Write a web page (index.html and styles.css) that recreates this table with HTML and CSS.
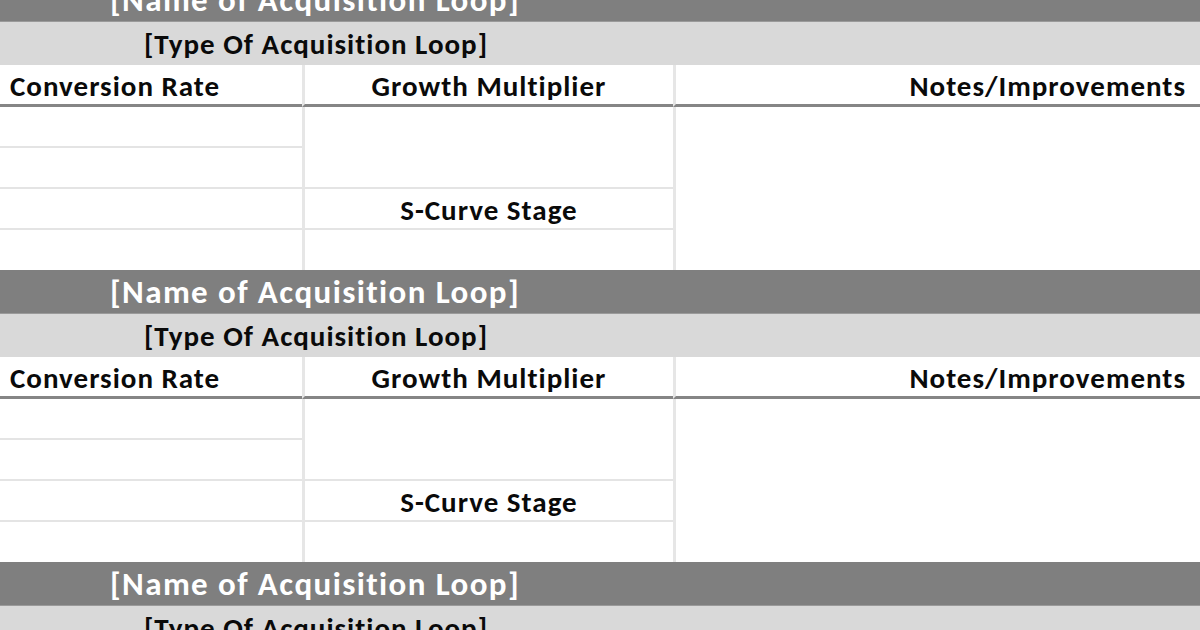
FILE: index.html
```html
<!DOCTYPE html>
<html lang="en">
<head>
<meta charset="utf-8">
<title>Acquisition Loops</title>
<link rel="stylesheet" href="styles.css">
</head>
<body>
<main class="sheet">
  <section class="loop">
    <div class="loop-name"><span>[Name of Acquisition Loop]</span></div>
    <div class="loop-type"><span>[Type Of Acquisition Loop]</span></div>
    <div class="grid">
      <div class="hd c1 left">Conversion Rate</div>
      <div class="hd c2">Growth Multiplier</div>
      <div class="hd c3 right">Notes/Improvements</div>
      <div class="cell c1 line"></div>
      <div class="cell c1 line"></div>
      <div class="cell c1 line"></div>
      <div class="cell c1"></div>
      <div class="cell c2 merge line"></div>
      <div class="cell c2 stage line">S-Curve Stage</div>
      <div class="cell c2 last"></div>
      <div class="cell c3 notes"></div>
    </div>
  </section>
  <section class="loop">
    <div class="loop-name"><span>[Name of Acquisition Loop]</span></div>
    <div class="loop-type"><span>[Type Of Acquisition Loop]</span></div>
    <div class="grid">
      <div class="hd c1 left">Conversion Rate</div>
      <div class="hd c2">Growth Multiplier</div>
      <div class="hd c3 right">Notes/Improvements</div>
      <div class="cell c1 line"></div>
      <div class="cell c1 line"></div>
      <div class="cell c1 line"></div>
      <div class="cell c1"></div>
      <div class="cell c2 merge line"></div>
      <div class="cell c2 stage line">S-Curve Stage</div>
      <div class="cell c2 last"></div>
      <div class="cell c3 notes"></div>
    </div>
  </section>
  <section class="loop">
    <div class="loop-name"><span>[Name of Acquisition Loop]</span></div>
    <div class="loop-type"><span>[Type Of Acquisition Loop]</span></div>
  </section>
</main>
</body>
</html>
```

FILE: styles.css
```css
* { box-sizing: border-box; }
html, body { margin: 0; padding: 0; background: #ffffff; overflow: hidden; }
body {
  width: 1200px;
  height: 630px;
  font-family: Carlito, Calibri, Lato, "Open Sans", sans-serif;
  font-weight: 700;
  color: #0a0a0a;
}
.sheet { margin-top: -22px; display: flex; flex-direction: column; }
.loop { display: flex; flex-direction: column; }
.loop-name {
  height: 44px;
  background: #7f7f7f;
  color: #ffffff;
  font-size: 33px;
  letter-spacing: 1.4px;
  display: flex;
  align-items: center;
  justify-content: center;
  width: 100%;
  padding-right: 570px;
  border-bottom: 1px solid #9a9a9a;
}
.loop-type {
  height: 43px;
  background: #d9d9d9;
  color: #0a0a0a;
  font-size: 29px;
  letter-spacing: 1px;
  display: flex;
  align-items: center;
  justify-content: center;
  padding-right: 568px;
}
.loop-name span, .loop-type span { white-space: nowrap; line-height: 1; padding-top: 2px; }
.grid {
  display: grid;
  grid-template-columns: 302px 371px 1fr;
  grid-template-rows: 42px 41px 41px 41px 40px;
}
.hd {
  font-size: 29px;
  letter-spacing: 1px;
  display: flex;
  align-items: center;
  justify-content: center;
  border-bottom: 3px solid #858585;
  white-space: nowrap;
  padding-top: 2px;
}
.hd.left { justify-content: flex-start; padding-left: 10px; }
.hd.right { justify-content: flex-end; padding-right: 14px; }
.c2, .c3 { border-left: 3px solid #e6e6e6; }
.c1 { grid-column: 1; }
.c2 { grid-column: 2; }
.c3 { grid-column: 3; }
.hd.c1 { grid-row: 1; }
.hd.c2 { grid-row: 1; }
.hd.c3 { grid-row: 1; }
.cell.line { border-bottom: 2px solid #e4e4e4; }
.cell.merge { grid-row: 2 / span 2; }
.cell.stage {
  grid-row: 4;
  font-size: 29px;
  letter-spacing: 1px;
  display: flex;
  align-items: center;
  justify-content: center;
  padding-top: 2px;
}
.cell.last { grid-row: 5; }
.cell.notes { grid-row: 2 / span 4; }
```
